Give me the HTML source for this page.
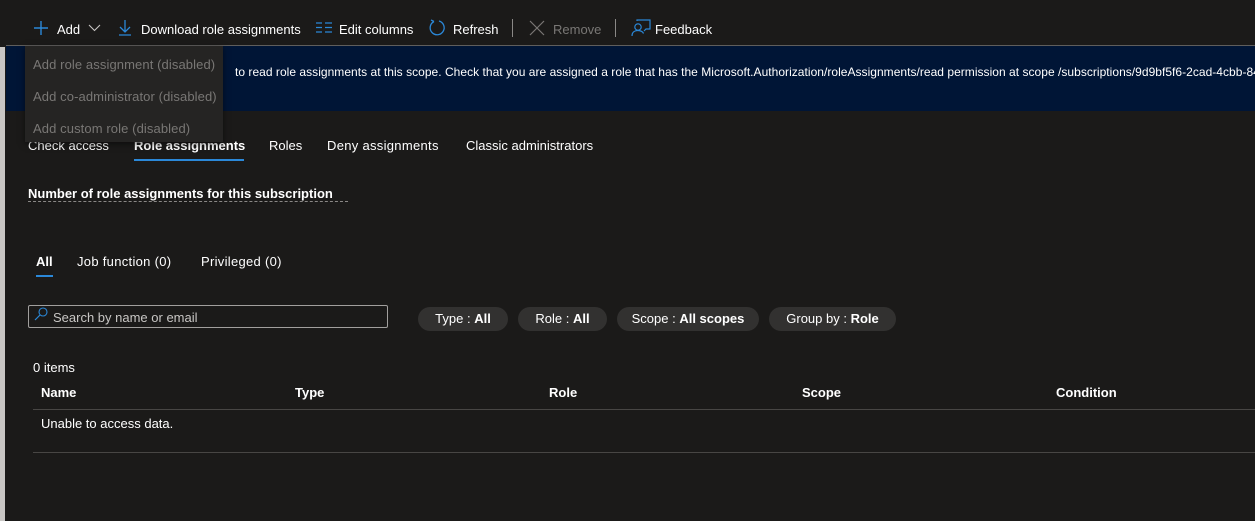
<!DOCTYPE html>
<html><head><style>
*{margin:0;padding:0;box-sizing:border-box}
body{width:1255px;height:521px;background:#1b1a19;font-family:"Segoe UI","Liberation Sans",sans-serif;font-size:13px;color:#fff;position:relative;overflow:hidden}
.a{position:absolute;white-space:nowrap}
div.a:not(:empty),.th,.pill,.menu div{margin-top:2px}
.strip{position:absolute;left:0;top:47px;width:5px;height:474px;background:#c8c6c4}
.topline{position:absolute;left:6px;top:45px;width:1249px;height:1px;background:#605e5c}
.banner{position:absolute;left:6px;top:46px;width:1249px;height:65px;background:#001536}
.menu{position:absolute;left:25px;top:46px;width:198px;height:96px;background:#252423;box-shadow:0 2px 6px rgba(0,0,0,.5)}
.menu div{position:absolute;left:8px;color:#797775;font-size:13px;letter-spacing:0.1px}
.pill{position:absolute;top:305px;height:24px;border-radius:12px;background:#323130;font-size:13px;line-height:24px;text-align:center}
.pill b{font-weight:700}
.th{position:absolute;top:383px;font-weight:700}
</style></head><body>
<div class="strip"></div>
<div class="banner"></div>
<div class="topline"></div>
<svg class="a" style="left:33px;top:20px" width="16" height="16"><path d="M8 1v14M1 8h14" stroke="#2b88d8" stroke-width="1.4"/></svg>
<div class="a" style="left:57px;top:20px">Add</div>
<svg class="a" style="left:88px;top:24px" width="13" height="8"><path d="M1 1l5.5 5.5L12 1" stroke="#c8c6c4" fill="none" stroke-width="1.1"/></svg>
<svg class="a" style="left:118px;top:19px" width="14" height="18"><path d="M7 1v12M2 8l5 5 5-5M1 16h12" stroke="#2b88d8" fill="none" stroke-width="1.3"/></svg>
<div class="a" style="left:141px;top:20px">Download role assignments</div>
<svg class="a" style="left:316px;top:22px" width="16" height="12"><path d="M0 1h6M9 1h7M0 5.5h6M9 5.5h7M0 10h6M9 10h7" stroke="#2b88d8" stroke-width="1.3"/></svg>
<div class="a" style="left:339px;top:20px">Edit columns</div>
<svg class="a" style="left:428px;top:19px" width="18" height="18"><path d="M6 2.5A7 7 0 1 0 11 2" stroke="#2b88d8" fill="none" stroke-width="1.3"/><path d="M6 2.5L3 1" stroke="#2b88d8" stroke-width="1.3"/></svg>
<div class="a" style="left:453px;top:20px">Refresh</div>
<div class="a" style="left:512px;top:19px;width:1px;height:18px;background:#8a8886"></div>
<svg class="a" style="left:529px;top:20px" width="16" height="16"><path d="M1 1l14 14M15 1L1 15" stroke="#797775" stroke-width="1.2"/></svg>
<div class="a" style="left:553px;top:20px;color:#797775">Remove</div>
<div class="a" style="left:615px;top:19px;width:1px;height:18px;background:#8a8886"></div>
<svg class="a" style="left:631px;top:19px" width="20" height="18"><circle cx="7" cy="8" r="3.2" stroke="#2b88d8" fill="none" stroke-width="1.2"/><path d="M1 17c0-4 3-5.5 6-5.5s5 1.5 5.5 3M6 2V1h13v9h-4l-2 2" stroke="#2b88d8" fill="none" stroke-width="1.2"/></svg>
<div class="a" style="left:655px;top:20px">Feedback</div>
<div class="a" style="left:235px;top:63px;font-size:12px;letter-spacing:0.03px">to read role assignments at this scope. Check that you are assigned a role that has the Microsoft.Authorization/roleAssignments/read permission at scope /subscriptions/9d9bf5f6-2cad-4cbb-84e1</div>
<div class="a" style="left:28px;top:136px">Check access</div>
<div class="a" style="left:134px;top:136px;font-weight:600">Role assignments</div>
<div class="a" style="left:134px;top:159px;width:110px;height:2px;background:#2b88d8"></div>
<div class="a" style="left:269px;top:136px">Roles</div>
<div class="a" style="left:327px;top:136px;letter-spacing:0.3px">Deny assignments</div>
<div class="a" style="left:466px;top:136px">Classic administrators</div>
<div class="menu">
<div style="top:9px">Add role assignment (disabled)</div>
<div style="top:41px">Add co-administrator (disabled)</div>
<div style="top:73px">Add custom role (disabled)</div>
</div>
<div class="a" style="left:28px;top:184px;font-weight:700">Number of role assignments for this subscription</div>
<div class="a" style="left:28px;top:201px;width:320px;height:1px;border-top:1px dashed #8a8886"></div>
<div class="a" style="left:36px;top:252px;font-weight:600">All</div>
<div class="a" style="left:36px;top:275px;width:17px;height:2px;background:#2b88d8"></div>
<div class="a" style="left:77px;top:252px;letter-spacing:0.3px">Job function (0)</div>
<div class="a" style="left:201px;top:252px;letter-spacing:0.3px">Privileged (0)</div>
<div class="a" style="left:28px;top:305px;width:360px;height:23px;border:1px solid #a19f9d;border-radius:2px"></div>
<svg class="a" style="left:34px;top:307px" width="14" height="14"><circle cx="9" cy="5" r="4" stroke="#2b88d8" fill="none" stroke-width="1.1"/><path d="M6 8L1 13" stroke="#2b88d8" stroke-width="1.2"/></svg>
<div class="a" style="left:53px;top:308px;color:#c8c6c4">Search by name or email</div>
<div class="pill" style="left:418px;width:90px">Type : <b>All</b></div>
<div class="pill" style="left:518px;width:89px">Role : <b>All</b></div>
<div class="pill" style="left:617px;width:142px">Scope : <b>All scopes</b></div>
<div class="pill" style="left:769px;width:127px">Group by : <b>Role</b></div>
<div class="a" style="left:33px;top:358px">0 items</div>
<div class="th" style="left:41px">Name</div>
<div class="th" style="left:295px">Type</div>
<div class="th" style="left:549px">Role</div>
<div class="th" style="left:802px">Scope</div>
<div class="th" style="left:1056px">Condition</div>
<div class="a" style="left:33px;top:409px;width:1222px;height:1px;background:#484644"></div>
<div class="a" style="left:41px;top:414px">Unable to access data.</div>
<div class="a" style="left:33px;top:452px;width:1222px;height:1px;background:#484644"></div>
</body></html>
